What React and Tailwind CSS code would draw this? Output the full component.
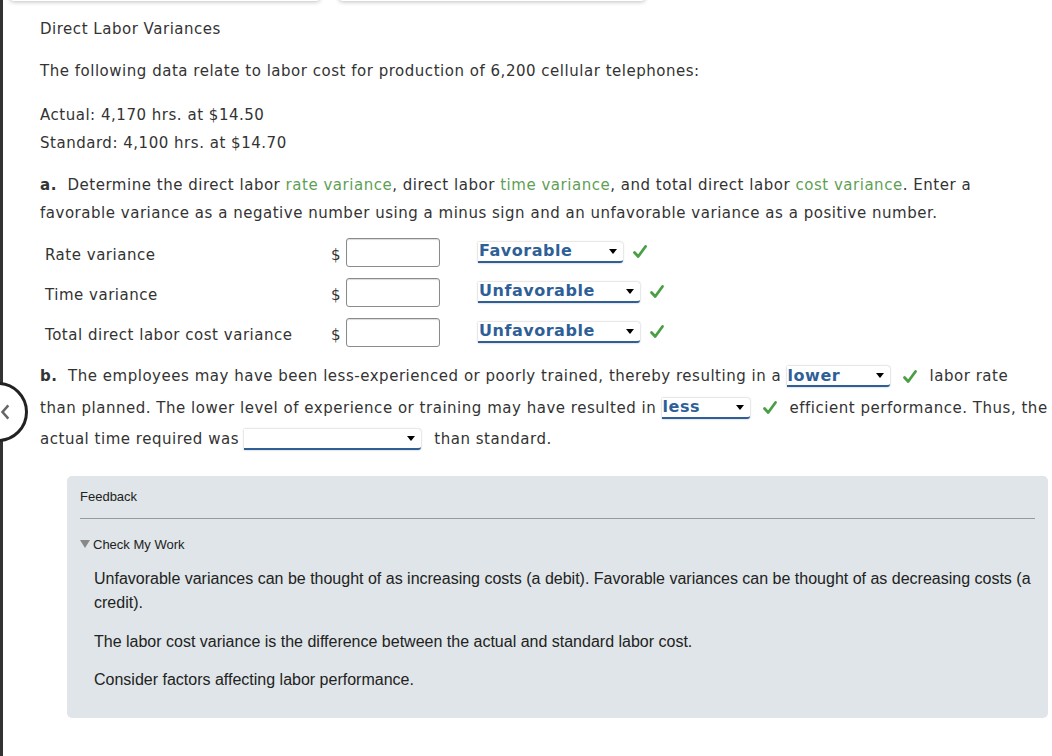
import React from "react";

const GREEN = "text-[#5f9f55]";

function Check({ className = "" }) {
  return (
    <svg viewBox="0 0 16 16" className={`h-[16px] w-[16px] ${className}`}>
      <path d="M2.5 8.5 L6.2 12.5 L13.5 2.5" fill="none" stroke="#4a9f45" strokeWidth="2.8" strokeLinecap="round" strokeLinejoin="round" />
    </svg>
  );
}

function Select({ value, width }) {
  return (
    <span
      className="inline-flex h-[21px] items-center justify-between rounded-r-[3px] border-b-2 border-[#2f5f97] bg-white pl-[1px] pr-[6px] shadow-[0_0_2px_rgba(0,0,0,0.35)]"
      style={{ width }}
    >
      <span className="text-[16px] font-bold leading-none text-[#2f5f97]">{value}</span>
      <span className="h-0 w-0 border-x-[4px] border-t-[5px] border-x-transparent border-t-black" />
    </span>
  );
}

function Row({ label, value, selW }) {
  return (
    <div className="flex h-[40px] items-center">
      <div className="w-[291px] pl-[5px]">{label}</div>
      <span className="w-[15px] text-[15px] tracking-normal">$</span>
      <span className="mb-[5px] h-[29px] w-[94px] rounded-[3px] border border-[#8a8a8a] bg-white shadow-[inset_0_1px_1px_rgba(0,0,0,0.15)]" />
      <span className="ml-[38px] mb-[6px] flex items-center gap-[9px]">
        <Select value={value} width={selW} />
        <Check />
      </span>
    </div>
  );
}

export default function App() {
  return (
    <div className="relative h-[756px] w-[1052px] overflow-hidden bg-white font-['DejaVu_Sans','Verdana',sans-serif] text-[15px] tracking-[0.52px] text-[#333]">
      <div className="absolute left-0 top-0 h-full w-[3px] bg-[#333]" />
      <div className="absolute left-[10px] top-[-20px] h-[21px] w-[310px] rounded-b bg-white shadow-[0_1px_4px_rgba(0,0,0,0.25)]" />
      <div className="absolute left-[339px] top-[-20px] h-[21px] w-[306px] rounded-b bg-white shadow-[0_1px_4px_rgba(0,0,0,0.25)]" />
      <div className="absolute left-[-32px] top-[382px] flex h-[60px] w-[60px] items-center justify-end rounded-full border-[3px] border-[#222] bg-white pr-[15px]">
        <svg viewBox="0 0 12 20" className="h-[18px] w-[10px]">
          <path d="M10 2 L3 10 L10 18" fill="none" stroke="#666" strokeWidth="3" />
        </svg>
      </div>

      <div className="pl-[40px] pt-[18px]">
        <div className="leading-[22px]">Direct Labor Variances</div>
        <div className="mt-[20px] leading-[22px]">
          The following data relate to labor cost for production of 6,200 cellular telephones:
        </div>
        <div className="mt-[19px] leading-[28px]">
          <div>Actual: 4,170 hrs. at $14.50</div>
          <div>Standard: 4,100 hrs. at $14.70</div>
        </div>
        <div className="mt-[14px] leading-[28px]">
          <div>
            <b>a.</b>&nbsp; Determine the direct labor <span className={GREEN}>rate variance</span>, direct labor{" "}
            <span className={GREEN}>time variance</span>, and total direct labor <span className={GREEN}>cost variance</span>. Enter a
          </div>
          <div>favorable variance as a negative number using a minus sign and an unfavorable variance as a positive number.</div>
        </div>
        <div className="mt-[8px]">
          <Row label="Rate variance" value="Favorable" selW={145} />
          <Row label="Time variance" value="Unfavorable" selW={162} />
          <Row label="Total direct labor cost variance" value="Unfavorable" selW={162} />
        </div>
        <div className="mt-[6px] whitespace-nowrap leading-[31.5px]">
          <div className="flex items-center">
            <b>b.</b>&nbsp; The employees may have been less-experienced or poorly trained, thereby resulting in a&nbsp;
            <Select value="lower" width={103} />
            <Check className="mx-[12px]" />
            labor rate
          </div>
          <div className="flex items-center">
            than planned. The lower level of experience or training may have resulted in&nbsp;
            <Select value="less" width={88} />
            <Check className="mx-[12px]" />
            efficient performance. Thus, the
          </div>
          <div className="flex items-center">
            actual time required was&nbsp;
            <Select value="" width={177} />
            <span className="ml-[13px]">than standard.</span>
          </div>
        </div>

        <div className="mt-[20px] ml-[27px] mr-[4px] h-[242px] rounded-[5px] bg-[#dfe5e8] px-[13px] pt-[12px] font-['Liberation_Sans',Arial,sans-serif] tracking-normal text-[#222]">
          <div className="text-[13px] leading-[17px]">Feedback</div>
          <div className="mt-[13px] h-px bg-[#9a9a9a]" />
          <div className="mt-[17px] flex items-center text-[13px] leading-[17px]">
            <span className="mr-[3px] h-0 w-0 border-x-[5px] border-t-[8px] border-x-transparent border-t-[#888]" />
            Check My Work
          </div>
          <div className="pl-[14px] text-[16px] leading-[24px]">
            <p className="mt-[14px]">
              Unfavorable variances can be thought of as increasing costs (a debit). Favorable variances can be thought of as decreasing costs (a credit).
            </p>
            <p className="mt-[15px]">The labor cost variance is the difference between the actual and standard labor cost.</p>
            <p className="mt-[14px]">Consider factors affecting labor performance.</p>
          </div>
        </div>
      </div>
    </div>
  );
}
